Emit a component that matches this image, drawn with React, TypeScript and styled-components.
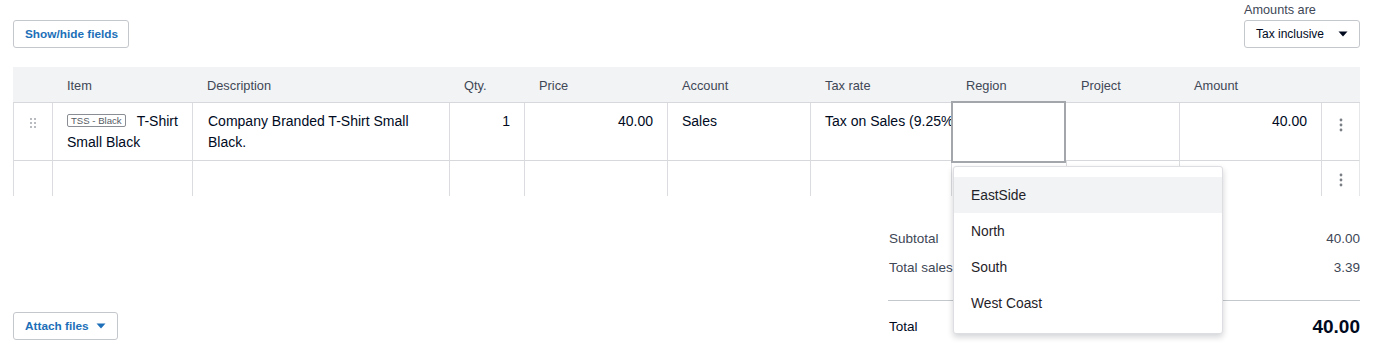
import styled, { createGlobalStyle } from "styled-components";

const GlobalStyle = createGlobalStyle`
  body {
    margin: 0;
    background: #ffffff;
    font-family: "Liberation Sans", Arial, sans-serif;
    color: #000a1e;
  }
`;

const columns = [
  { key: "drag", label: "", width: 39 },
  { key: "item", label: "Item", width: 140 },
  { key: "desc", label: "Description", width: 257 },
  { key: "qty", label: "Qty.", width: 75 },
  { key: "price", label: "Price", width: 143 },
  { key: "account", label: "Account", width: 143 },
  { key: "tax", label: "Tax rate", width: 141 },
  { key: "region", label: "Region", width: 115 },
  { key: "project", label: "Project", width: 113 },
  { key: "amount", label: "Amount", width: 142 },
  { key: "menu", label: "", width: 39 },
];

const regions = ["EastSide", "North", "South", "West Coast"];

function DragHandle() {
  return (
    <svg width="8" height="10" viewBox="0 0 8 10">
      {[1, 5, 9].map((y) =>
        [2, 6].map((x) => <circle key={`${x}-${y}`} cx={x} cy={y} r="1" fill="#a0a4aa" />)
      )}
    </svg>
  );
}

function Kebab() {
  return (
    <svg width="4" height="14" viewBox="0 0 4 14">
      <circle cx="2" cy="2" r="1.4" fill="#7a7e85" />
      <circle cx="2" cy="7" r="1.4" fill="#7a7e85" />
      <circle cx="2" cy="12" r="1.4" fill="#7a7e85" />
    </svg>
  );
}

function Caret({ color }: { color: string }) {
  return (
    <svg width="10" height="6" viewBox="0 0 10 6">
      <path d="M0.5 0.5 L9.5 0.5 L5 5.5 Z" fill={color} />
    </svg>
  );
}

export default function App() {
  return (
    <>
      <GlobalStyle />
      <Page>
        <TopBar>
          <OutlineButton>Show/hide fields</OutlineButton>
          <AmountsBox>
            <SmallLabel>Amounts are</SmallLabel>
            <Select>
              Tax inclusive
              <Caret color="#000a1e" />
            </Select>
          </AmountsBox>
        </TopBar>

        <Grid $cols={columns.map((c) => c.width + "px").join(" ")}>
          {columns.map((c) => (
            <HeadCell key={c.key}>{c.label}</HeadCell>
          ))}

          <Cell $center>
            <DragHandle />
          </Cell>
          <Cell>
            <Badge>TSS - Black</Badge>T-Shirt Small Black
          </Cell>
          <Cell $wide>Company Branded T-Shirt Small Black.</Cell>
          <Cell $right>1</Cell>
          <Cell $right>40.00</Cell>
          <Cell>Sales</Cell>
          <Cell $clip>Tax on Sales (9.25%)</Cell>
          <FocusCell>
            <Menu>
              {regions.map((r, i) => (
                <MenuItem key={r} $active={i === 0}>
                  {r}
                </MenuItem>
              ))}
            </Menu>
          </FocusCell>
          <Cell $noLeft />
          <Cell $right>40.00</Cell>
          <Cell $center $last>
            <Kebab />
          </Cell>

          {columns.map((c) =>
            c.key === "menu" ? (
              <EmptyCell key={c.key} $last>
                <Kebab />
              </EmptyCell>
            ) : (
              <EmptyCell key={c.key} />
            )
          )}
        </Grid>

        <Footer>
          <AttachButton>
            Attach files
            <Caret color="#1c6fb8" />
          </AttachButton>
          <Totals>
            <TotalRow>
              <span>Subtotal</span>
              <span>40.00</span>
            </TotalRow>
            <TotalRow>
              <span>Total sales tax</span>
              <span>3.39</span>
            </TotalRow>
            <GrandTotal>
              <span>Total</span>
              <strong>40.00</strong>
            </GrandTotal>
          </Totals>
        </Footer>
      </Page>
    </>
  );
}

const Page = styled.div`
  width: 1347px;
  padding: 0 22px 0 13px;
  font-size: 14px;
`;

const TopBar = styled.div`
  display: flex;
  justify-content: space-between;
  align-items: flex-end;
  height: 48px;
`;

const OutlineButton = styled.button`
  height: 28px;
  padding: 0 10px 0 11px;
  border: 1px solid #c4c7cc;
  border-radius: 3px;
  background: #ffffff;
  color: #1c6fb8;
  font-family: "Liberation Sans", Arial, sans-serif;
  font-size: 11.8px;
  font-weight: 700;
  display: inline-flex;
  align-items: center;
  gap: 7px;
  cursor: pointer;
`;

const AttachButton = styled(OutlineButton)`
  margin-bottom: 12px;
  padding: 0 11px;
`;

const AmountsBox = styled.div`
  display: flex;
  flex-direction: column;
  gap: 3px;
`;

const SmallLabel = styled.span`
  font-size: 12.7px;
  color: #404756;
`;

const Select = styled.div`
  width: 116px;
  height: 28px;
  box-sizing: border-box;
  border: 1px solid #c4c7cc;
  border-radius: 3px;
  padding: 0 11px;
  display: flex;
  align-items: center;
  justify-content: space-between;
  font-size: 12px;
  color: #000a1e;
`;

const Grid = styled.div<{ $cols: string }>`
  margin-top: 19px;
  display: grid;
  grid-template-columns: ${(p) => p.$cols};
  grid-template-rows: 36px 58px 35px;
`;

const HeadCell = styled.div`
  background: #f2f3f4;
  border-bottom: 1px solid #d6d8db;
  padding: 1px 14px 0 15px;
  display: flex;
  align-items: center;
  font-size: 12.8px;
  color: #404756;
`;

const Cell = styled.div<{
  $right?: boolean;
  $center?: boolean;
  $clip?: boolean;
  $noLeft?: boolean;
  $wide?: boolean;
  $last?: boolean;
}>`
  border-bottom: 1px solid #d6d8db;
  border-left: ${(p) => (p.$noLeft ? "none" : "1px solid #dadcdf")};
  border-right: ${(p) => (p.$last ? "1px solid #e6e7e9" : "none")};
  padding: 8px ${(p) => (p.$clip ? "0" : "14px")} 0 ${(p) => (p.$wide ? "15px" : "14px")};
  line-height: 21px;
  text-align: ${(p) => (p.$right ? "right" : "left")};
  white-space: ${(p) => (p.$clip ? "nowrap" : "normal")};
  overflow: ${(p) => (p.$clip ? "hidden" : "visible")};
  ${(p) =>
    p.$center &&
    `
    display: flex;
    justify-content: center;
    padding: 15px 0 0;
  `}
`;

const EmptyCell = styled.div<{ $last?: boolean }>`
  border-left: 1px solid #dadcdf;
  border-right: ${(p) => (p.$last ? "1px solid #e6e7e9" : "none")};
  display: flex;
  justify-content: center;
  padding-top: 12px;
`;

const FocusCell = styled.div`
  position: relative;
  margin: -2px 0 -2px;
  border: 2px solid #a3a6ab;
  z-index: 1;
`;

const Badge = styled.span`
  display: inline-block;
  border: 1px solid #8a8e94;
  border-radius: 2px;
  padding: 0 3px;
  margin-right: 11px;
  font-size: 9.6px;
  line-height: 11px;
  color: #555a62;
  vertical-align: 2px;
`;

const Menu = styled.div`
  position: absolute;
  left: 0;
  top: 63px;
  width: 270px;
  box-sizing: border-box;
  padding: 10px 0 12px;
  background: #ffffff;
  border: 1px solid #dcdee1;
  border-radius: 3px;
  box-shadow: 0 3px 6px rgba(0, 10, 30, 0.18);
`;

const MenuItem = styled.div<{ $active?: boolean }>`
  height: 36px;
  padding: 0 17px;
  display: flex;
  align-items: center;
  font-size: 13.8px;
  color: #1f2329;
  background: ${(p) => (p.$active ? "#f2f3f4" : "transparent")};
`;

const Footer = styled.div`
  display: flex;
  justify-content: space-between;
  align-items: flex-end;
`;

const Totals = styled.div`
  width: 472px;
  padding-top: 28px;
`;

const TotalRow = styled.div`
  display: flex;
  justify-content: space-between;
  height: 29px;
  line-height: 29px;
  padding-left: 1px;
  font-size: 13.5px;
  color: #404756;
`;

const GrandTotal = styled.div`
  margin-top: 18px;
  border-top: 1px solid #c4c7cc;
  display: flex;
  justify-content: space-between;
  align-items: center;
  height: 51px;
  padding-left: 1px;
  font-size: 13.5px;
  color: #000a1e;
  strong {
    font-size: 19px;
    font-weight: 700;
  }
`;
